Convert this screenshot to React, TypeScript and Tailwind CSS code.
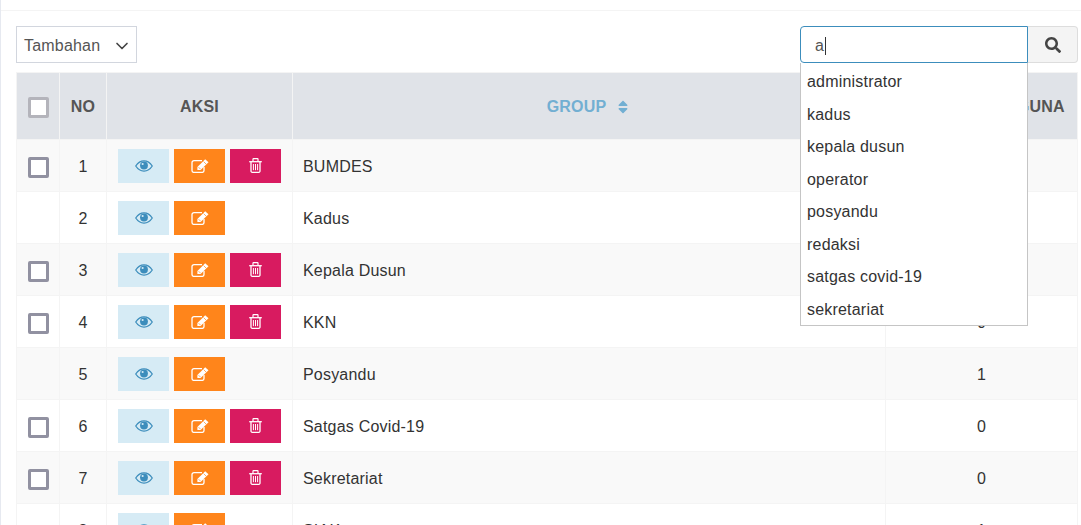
import { ChevronDown } from "lucide-react";
import { FaSearch, FaSort } from "react-icons/fa";

type Row = { no: number; name: string; total: string; locked?: boolean };

const rows: Row[] = [
  { no: 1, name: "BUMDES", total: "0" },
  { no: 2, name: "Kadus", total: "1", locked: true },
  { no: 3, name: "Kepala Dusun", total: "0" },
  { no: 4, name: "KKN", total: "0" },
  { no: 5, name: "Posyandu", total: "1", locked: true },
  { no: 6, name: "Satgas Covid-19", total: "0" },
  { no: 7, name: "Sekretariat", total: "0" },
  { no: 8, name: "SIAK", total: "1", locked: true },
];

const suggestions = [
  "administrator",
  "kadus",
  "kepala dusun",
  "operator",
  "posyandu",
  "redaksi",
  "satgas covid-19",
  "sekretariat",
];

function Checkbox({ light }: { light?: boolean }) {
  return (
    <span
      className={`mx-auto mt-[3px] block h-[21px] w-[21px] rounded-[2px] border-[3px] bg-white ${
        light ? "border-[#b4b4bb]" : "border-[#9191a1]"
      }`}
    />
  );
}

function ActionButton({ className, children }: { className: string; children: React.ReactNode }) {
  return <span className={`flex h-[34px] w-[51px] items-center justify-center ${className}`}>{children}</span>;
}

function EyeIcon() {
  return (
    <svg width="18" height="12" viewBox="0 0 17 11" fill="none">
      <path
        d="M0.7 5.5C3 2 5.5 0.7 8.5 0.7S14 2 16.3 5.5C14 9 11.5 10.3 8.5 10.3S3 9 0.7 5.5Z"
        stroke="currentColor"
        strokeWidth="1.2"
      />
      <circle cx="8.5" cy="5" r="3.7" fill="currentColor" />
      <circle cx="7.2" cy="3.6" r="1" fill="#d6ebf5" />
    </svg>
  );
}

function EditIcon() {
  return (
    <svg width="18" height="14" viewBox="0 0 18 14" fill="none">
      <path
        d="M11 1.6H3a2 2 0 0 0-2 2v7.8a2 2 0 0 0 2 2h8a2 2 0 0 0 2-2V8"
        stroke="currentColor"
        strokeWidth="1.3"
      />
      <path d="M14.2 0.3l3.3 3L9.6 11H6.4V7.9z" fill="currentColor" />
      <path d="M12.6 2.6l2.6 2.6M7.6 8.2l2 2" stroke="#ff851b" strokeWidth="0.7" />
    </svg>
  );
}

function TrashIcon() {
  return (
    <svg width="13" height="15" viewBox="0 0 13 15" fill="none" stroke="currentColor">
      <path d="M4 3.4V1.2a.5.5 0 0 1 .5-.5h4a.5.5 0 0 1 .5.5v2.2" strokeWidth="1.2" />
      <path d="M0.2 3.7h12.6" strokeWidth="1.3" />
      <path d="M2 4v9a1.2 1.2 0 0 0 1.2 1.3h6.6A1.2 1.2 0 0 0 11 13V4" strokeWidth="1.3" />
      <path d="M4.4 6v6.2M6.5 6v6.2M8.6 6v6.2" strokeWidth="1" />
    </svg>
  );
}

export default function App() {
  return (
    <div className="relative h-[525px] w-[1081px] overflow-hidden bg-white font-['Liberation_Sans',Arial,sans-serif] text-base tracking-[0.2px] text-[#333]">
      <div className="h-full border-l border-[#e6e9f0]">
        <div className="h-[11px] border-b border-[#f4f4f4]" />
        <div className="flex h-[61px] items-start justify-between pl-[15px] pr-[3px] pt-[15px]">
          <div className="flex h-[37px] w-[121px] items-center justify-between border border-[#d2d6de] pl-[7px] pr-[4px] pt-[2px] text-[#555]">
            <span>Tambahan</span>
            <ChevronDown size={20} strokeWidth={2} className="text-[#444]" />
          </div>
          <div className="relative flex h-[37px]">
            <div className="flex w-[228px] items-center rounded-l-[4px] border border-[#3c8dbc] pl-[14px] pt-[2px] text-[#555]">
              a<span className="ml-px h-[18px] w-px bg-[#333]" />
            </div>
            <div className="flex w-[50px] items-center justify-center rounded-r-[4px] border border-l-0 border-[#ddd] bg-[#f4f4f4] text-[#444]">
              <FaSearch size={16} />
            </div>
            <ul className="absolute left-0 top-[37px] z-10 h-[263px] w-[228px] border border-t-0 border-[#c5c5c5] bg-white pl-[6px]">
              {suggestions.map((item) => (
                <li key={item} className="h-[32.58px] leading-[37.5px]">
                  {item}
                </li>
              ))}
            </ul>
          </div>
        </div>
        <table className="ml-[15px] w-[1061px] table-fixed border-collapse">
          <colgroup>
            <col className="w-[43px]" />
            <col className="w-[47px]" />
            <col className="w-[186px]" />
            <col className="w-[593px]" />
            <col className="w-[192px]" />
          </colgroup>
          <thead>
            <tr className="h-[67px] bg-[#e0e3e8] font-bold text-[#555]">
              <th className="border border-[#f4f4f4]">
                <Checkbox light />
              </th>
              <th className="border border-[#f4f4f4] pt-[2px]">NO</th>
              <th className="border border-[#f4f4f4] pt-[2px]">AKSI</th>
              <th className="border border-[#f4f4f4] pt-[2px] text-[#72afd2]">
                <span className="inline-flex items-center gap-[9px]">
                  GROUP <FaSort size={16} />
                </span>
              </th>
              <th className="whitespace-nowrap border border-[#f4f4f4] pt-[2px]">JUMLAH PENGGUNA</th>
            </tr>
          </thead>
          <tbody>
            {rows.map((row) => (
              <tr key={row.no} className={`h-[52px] ${row.no % 2 === 1 ? "bg-[#f9f9f9]" : "bg-white"}`}>
                <td className="border border-[#f4f4f4]">{!row.locked && <Checkbox />}</td>
                <td className="border border-[#f4f4f4] pt-[2px] text-center">{row.no}</td>
                <td className="border border-[#f4f4f4] pl-[11px]">
                  <div className="flex gap-[5px]">
                    <ActionButton className="bg-[#d6ebf5] text-[#3c8dbc]">
                      <EyeIcon />
                    </ActionButton>
                    <ActionButton className="bg-[#ff851b] text-white">
                      <EditIcon />
                    </ActionButton>
                    {!row.locked && (
                      <ActionButton className="bg-[#d81b60] text-white">
                        <TrashIcon />
                      </ActionButton>
                    )}
                  </div>
                </td>
                <td className="border border-[#f4f4f4] pl-[10px] pt-[2px]">{row.name}</td>
                <td className="border border-[#f4f4f4] pt-[2px] text-center">{row.total}</td>
              </tr>
            ))}
          </tbody>
        </table>
      </div>
    </div>
  );
}
